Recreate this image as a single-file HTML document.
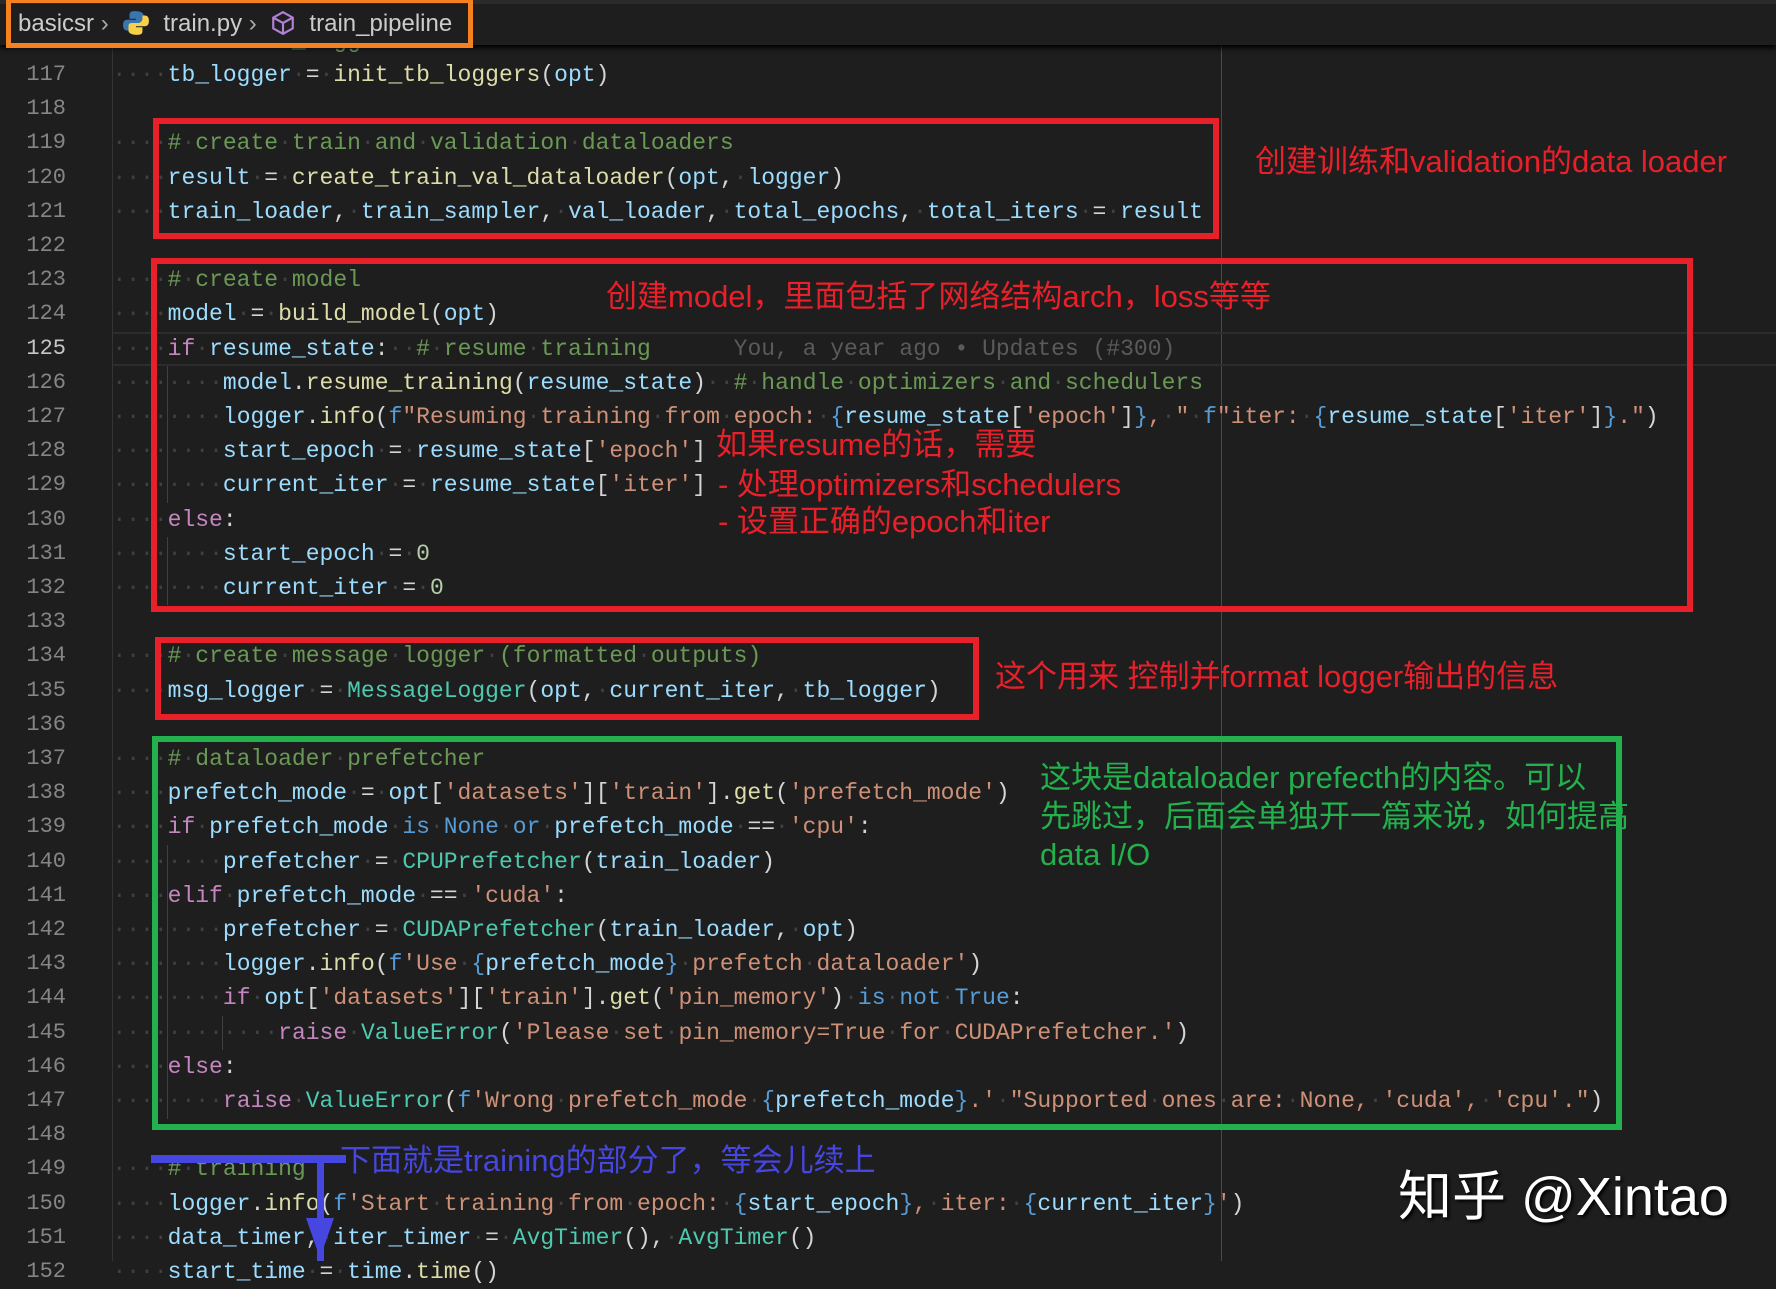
<!DOCTYPE html>
<html><head><meta charset="utf-8"><style>
html,body{margin:0;padding:0}
body{width:1776px;height:1261px;background:#1e1e1e;position:relative;overflow:hidden;font-family:"Liberation Mono",monospace}
.ln{position:absolute;left:0;width:66px;text-align:right;font-size:22px;color:#858585;height:34.2px;line-height:34.2px}
.ln.cur{color:#c6c6c6}
.cl{position:absolute;left:112.4px;font-size:23px;white-space:pre;height:34.2px;line-height:34.2px;color:#d4d4d4}
.ws{color:#404040}
.v{color:#9cdcfe}.f{color:#dcdcaa}.s{color:#ce9178}.c{color:#6a9955}.k{color:#c586c0}.b{color:#569cd6}.t{color:#4ec9b0}.n{color:#b5cea8}
.gut{position:absolute;left:112px;top:45px;width:1px;height:1216px;background:#333}
.ruler{position:absolute;left:1221px;top:45px;width:1px;height:1216px;background:#4a4a4a}
.ig{position:absolute;width:1px;background:#404040}
.box{position:absolute;box-sizing:border-box;border:6px solid #e8202a}
.g{border-color:#22b14c}
.ann{position:absolute;font-family:"Liberation Sans","Noto Sans CJK SC",sans-serif;font-size:31px;color:#e8202a;white-space:nowrap;line-height:38px;letter-spacing:0px}
.bar{position:absolute;left:0;top:0;width:1776px;height:45px;background:#1e1e1e;box-shadow:0 3px 5px #000}
</style></head><body>
<div class="gut"></div><div class="ruler"></div>
<div style="position:absolute;left:113px;top:332px;width:1663px;height:34px;border-top:2px solid #2c2c2c;border-bottom:2px solid #2c2c2c;box-sizing:border-box"></div>
<div class="ig" style="left:167px;top:366px;height:137px"></div>
<div class="ig" style="left:167px;top:537px;height:68px"></div>
<div class="ig" style="left:167px;top:845px;height:274px"></div>
<div class="ig" style="left:222px;top:1016px;height:34px"></div>
<div id="code"></div>

<div class="box" style="left:153px;top:118px;width:1066px;height:121px"></div>
<div class="box" style="left:151px;top:258px;width:1542px;height:354px"></div>
<div class="box" style="left:155px;top:637px;width:824px;height:83px"></div>
<div class="box g" style="left:152px;top:736px;width:1470px;height:394px"></div>

<div class="ann" style="left:1255px;top:143px">创建训练和validation的data loader</div>
<div class="ann" style="left:606px;top:278px">创建model，里面包括了网络结构arch，loss等等</div>
<div class="ann" style="left:716px;top:426px">如果resume的话，需要</div>
<div class="ann" style="left:718px;top:466px">- 处理optimizers和schedulers</div>
<div class="ann" style="left:718px;top:503px">- 设置正确的epoch和iter</div>
<div class="ann" style="left:995px;top:658px">这个用来 控制并format logger输出的信息</div>
<div class="ann" style="left:1040px;top:759px;color:#22b14c">这块是dataloader prefecth的内容。可以</div>
<div class="ann" style="left:1040px;top:798px;color:#22b14c">先跳过，后面会单独开一篇来说，如何提高</div>
<div class="ann" style="left:1040px;top:836px;color:#22b14c">data I/O</div>
<div class="ann" style="left:340px;top:1142px;color:#4646e0">下面就是training的部分了，等会儿续上</div>
<div style="position:absolute;left:151px;top:1155px;width:195px;height:8px;background:#4646e0"></div>
<div style="position:absolute;left:317px;top:1155px;width:7px;height:106px;background:#4646e0"></div>
<div style="position:absolute;left:306px;top:1218px;width:0;height:0;border-left:14px solid transparent;border-right:14px solid transparent;border-top:40px solid #4646e0"></div>
<div style="position:absolute;left:1398px;top:1152px;font-family:'Liberation Sans','Noto Sans CJK SC',sans-serif;font-size:54px;color:#fff;text-shadow:2px 2px 3px #000;white-space:nowrap">知乎 @Xintao</div>

<div class="bar"><div style="position:absolute;left:0;top:0;width:1776px;height:4px;background:#2a2a2a"></div></div>
<div style="position:absolute;left:6px;top:0;width:467px;height:48px;box-sizing:border-box;border:5px solid #f58220;border-top-width:3px"></div>
<div style="position:absolute;left:18px;top:7px;font-family:'Liberation Sans',sans-serif;font-size:24px;color:#cccccc;white-space:nowrap;line-height:34px">basicsr <span style="color:#aaa">›</span>&nbsp;
<svg width="28" height="28" viewBox="0 0 26 26" style="vertical-align:-6px"><path d="M12 2c-5 0-5 2-5 4v3h6v1H5c-3 0-4 2-4 5s1 5 4 5h2v-3c0-2 2-4 4-4h6c2 0 3-1 3-3V6c0-2-2-4-8-4z" fill="#3a75b0"/><path d="M14 24c5 0 5-2 5-4v-3h-6v-1h8c3 0 4-2 4-5s-1-5-4-5h-2v3c0 2-2 4-4 4H9c-2 0-3 1-3 3v4c0 2 2 4 8 4z" fill="#f7d04a"/></svg>
&nbsp;train.py <span style="color:#aaa">›</span>&nbsp;
<svg width="26" height="26" viewBox="0 0 24 24" style="vertical-align:-5px" fill="none" stroke="#b180d7" stroke-width="2"><path d="M12 2l9 5v10l-9 5-9-5V7z M3 7l9 5 9-5 M12 12v10"/></svg>
&nbsp;train_pipeline</div>

<script>
const L=[
[116,'    <span class="c"># init tb_loggers</span>'],
[117,'    <span class="v">tb_logger</span> = <span class="f">init_tb_loggers</span>(<span class="v">opt</span>)'],
[118,''],
[119,'    <span class="c"># create train and validation dataloaders</span>'],
[120,'    <span class="v">result</span> = <span class="f">create_train_val_dataloader</span>(<span class="v">opt</span>, <span class="v">logger</span>)'],
[121,'    <span class="v">train_loader</span>, <span class="v">train_sampler</span>, <span class="v">val_loader</span>, <span class="v">total_epochs</span>, <span class="v">total_iters</span> = <span class="v">result</span>'],
[122,''],
[123,'    <span class="c"># create model</span>'],
[124,'    <span class="v">model</span> = <span class="f">build_model</span>(<span class="v">opt</span>)'],
[125,'    <span class="k">if</span> <span class="v">resume_state</span>:  <span class="c"># resume training</span><span style="color:#5a5a5a">      You, a year ago • Updates (#300)</span>'],
[126,'        <span class="v">model</span>.<span class="f">resume_training</span>(<span class="v">resume_state</span>)  <span class="c"># handle optimizers and schedulers</span>'],
[127,'        <span class="v">logger</span>.<span class="f">info</span>(<span class="b">f</span><span class="s">"Resuming training from epoch: </span><span class="b">{</span><span class="v">resume_state</span>[<span class="s">\'epoch\'</span>]<span class="b">}</span><span class="s">, "</span> <span class="b">f</span><span class="s">"iter: </span><span class="b">{</span><span class="v">resume_state</span>[<span class="s">\'iter\'</span>]<span class="b">}</span><span class="s">."</span>)'],
[128,'        <span class="v">start_epoch</span> = <span class="v">resume_state</span>[<span class="s">\'epoch\'</span>]'],
[129,'        <span class="v">current_iter</span> = <span class="v">resume_state</span>[<span class="s">\'iter\'</span>]'],
[130,'    <span class="k">else</span>:'],
[131,'        <span class="v">start_epoch</span> = <span class="n">0</span>'],
[132,'        <span class="v">current_iter</span> = <span class="n">0</span>'],
[133,''],
[134,'    <span class="c"># create message logger (formatted outputs)</span>'],
[135,'    <span class="v">msg_logger</span> = <span class="t">MessageLogger</span>(<span class="v">opt</span>, <span class="v">current_iter</span>, <span class="v">tb_logger</span>)'],
[136,''],
[137,'    <span class="c"># dataloader prefetcher</span>'],
[138,'    <span class="v">prefetch_mode</span> = <span class="v">opt</span>[<span class="s">\'datasets\'</span>][<span class="s">\'train\'</span>].<span class="f">get</span>(<span class="s">\'prefetch_mode\'</span>)'],
[139,'    <span class="k">if</span> <span class="v">prefetch_mode</span> <span class="b">is</span> <span class="b">None</span> <span class="b">or</span> <span class="v">prefetch_mode</span> == <span class="s">\'cpu\'</span>:'],
[140,'        <span class="v">prefetcher</span> = <span class="t">CPUPrefetcher</span>(<span class="v">train_loader</span>)'],
[141,'    <span class="k">elif</span> <span class="v">prefetch_mode</span> == <span class="s">\'cuda\'</span>:'],
[142,'        <span class="v">prefetcher</span> = <span class="t">CUDAPrefetcher</span>(<span class="v">train_loader</span>, <span class="v">opt</span>)'],
[143,'        <span class="v">logger</span>.<span class="f">info</span>(<span class="b">f</span><span class="s">\'Use </span><span class="b">{</span><span class="v">prefetch_mode</span><span class="b">}</span><span class="s"> prefetch dataloader\'</span>)'],
[144,'        <span class="k">if</span> <span class="v">opt</span>[<span class="s">\'datasets\'</span>][<span class="s">\'train\'</span>].<span class="f">get</span>(<span class="s">\'pin_memory\'</span>) <span class="b">is</span> <span class="b">not</span> <span class="b">True</span>:'],
[145,'            <span class="k">raise</span> <span class="t">ValueError</span>(<span class="s">\'Please set pin_memory=True for CUDAPrefetcher.\'</span>)'],
[146,'    <span class="k">else</span>:'],
[147,'        <span class="k">raise</span> <span class="t">ValueError</span>(<span class="b">f</span><span class="s">\'Wrong prefetch_mode </span><span class="b">{</span><span class="v">prefetch_mode</span><span class="b">}</span><span class="s">.\'</span> <span class="s">"Supported ones are: None, \'cuda\', \'cpu\'."</span>)'],
[148,''],
[149,'    <span class="c"># training</span>'],
[150,'    <span class="v">logger</span>.<span class="f">info</span>(<span class="b">f</span><span class="s">\'Start training from epoch: </span><span class="b">{</span><span class="v">start_epoch</span><span class="b">}</span><span class="s">, iter: </span><span class="b">{</span><span class="v">current_iter</span><span class="b">}</span><span class="s">\'</span>)'],
[151,'    <span class="v">data_timer</span>, <span class="v">iter_timer</span> = <span class="t">AvgTimer</span>(), <span class="t">AvgTimer</span>()'],
[152,'    <span class="v">start_time</span> = <span class="v">time</span>.<span class="f">time</span>()'],
];
const root=document.getElementById('code');let h='';
for(const [n,c] of L){const top=58+(n-117)*34.2;
if(n>116)h+=`<div class="ln${n==125?' cur':''}" style="top:${top}px">${n}</div>`;
h+=`<div class="cl" style="top:${top}px">${c}</div>`;}
root.innerHTML=h;
function walk(el){for(const nd of [...el.childNodes]){if(nd.nodeType==3){if(nd.parentNode.style&&nd.parentNode.style.color)continue;const t=nd.textContent;if(!t.includes(' '))continue;const f=document.createDocumentFragment();t.split(/( )/).forEach(p=>{if(p==' '){const s=document.createElement('span');s.className='ws';s.textContent='·';f.appendChild(s)}else if(p)f.appendChild(document.createTextNode(p))});nd.replaceWith(f)}else if(nd.nodeType==1)walk(nd)}}
document.querySelectorAll('.cl').forEach(walk);
</script>
</body></html>
